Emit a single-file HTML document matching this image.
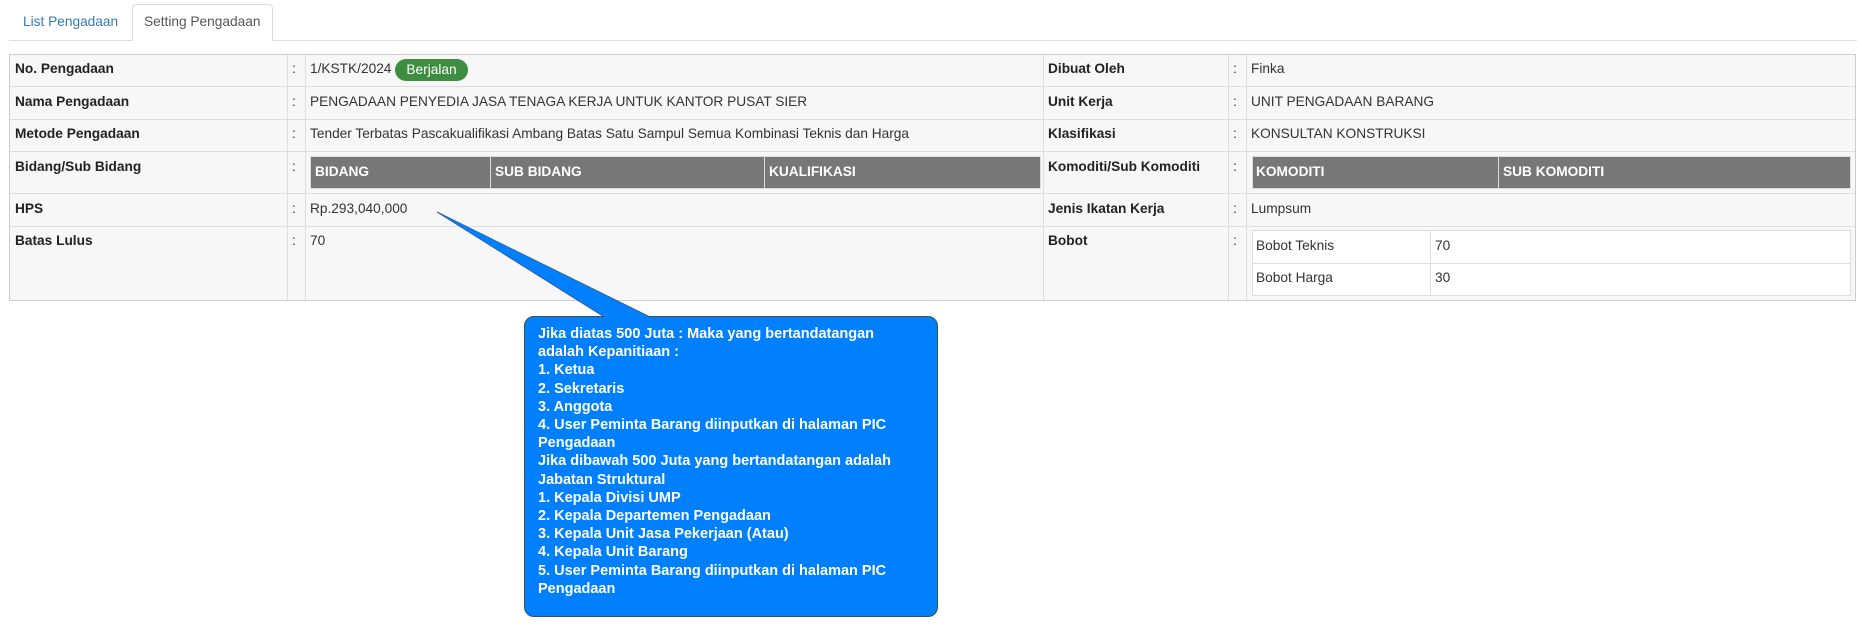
<!DOCTYPE html>
<html><head><meta charset="utf-8"><style>
*{margin:0;padding:0;box-sizing:border-box}
body{width:1862px;height:633px;background:#fff;position:relative;overflow:hidden;font-family:"Liberation Sans",sans-serif;font-size:13.7px;color:#333}
.a{position:absolute;white-space:nowrap;line-height:16px}
.b{font-weight:bold;color:#222}
.l{position:absolute;background:#ddd}
.h{position:absolute;background:#777;border:1px solid #ddd}
.w{color:#fff;font-weight:bold}
</style></head><body>
<!-- tabs -->
<div class="l" style="left:9px;top:40px;width:1848px;height:1px;background:#ddd"></div>
<div style="position:absolute;left:132px;top:4px;width:141px;height:37px;border:1px solid #ddd;border-bottom:none;background:#fff;border-radius:4px 4px 0 0"></div>
<div class="a" style="left:23px;top:14px;color:#337ab7">List Pengadaan</div>
<div class="a" style="left:144px;top:14px;color:#555">Setting Pengadaan</div>
<!-- table -->
<div style="position:absolute;left:9px;top:54px;width:1847px;height:247px;background:#f7f7f7;border:1px solid #ccc"></div>
<div class="l" style="left:10px;top:86px;width:1845px;height:1px"></div>
<div class="l" style="left:10px;top:119px;width:1845px;height:1px"></div>
<div class="l" style="left:10px;top:151px;width:1845px;height:1px"></div>
<div class="l" style="left:10px;top:193px;width:1845px;height:1px"></div>
<div class="l" style="left:10px;top:226px;width:1845px;height:1px"></div>
<div class="l" style="left:287px;top:55px;width:1px;height:245px"></div>
<div class="l" style="left:305px;top:55px;width:1px;height:245px"></div>
<div class="l" style="left:1043px;top:55px;width:1px;height:245px"></div>
<div class="l" style="left:1228px;top:55px;width:1px;height:245px"></div>
<div class="l" style="left:1246px;top:55px;width:1px;height:245px"></div>
<!-- left labels -->
<div class="a b" style="left:15px;top:61px">No. Pengadaan</div>
<div class="a b" style="left:15px;top:94px">Nama Pengadaan</div>
<div class="a b" style="left:15px;top:126px">Metode Pengadaan</div>
<div class="a b" style="left:15px;top:159px">Bidang/Sub Bidang</div>
<div class="a b" style="left:15px;top:201px">HPS</div>
<div class="a b" style="left:15px;top:233px">Batas Lulus</div>
<div class="a" style="left:292px;top:61px">:</div>
<div class="a" style="left:292px;top:94px">:</div>
<div class="a" style="left:292px;top:126px">:</div>
<div class="a" style="left:292px;top:159px">:</div>
<div class="a" style="left:292px;top:201px">:</div>
<div class="a" style="left:292px;top:233px">:</div>
<div class="a" style="left:310px;top:61px">1/KSTK/2024</div>
<div class="a" style="left:395px;top:59px;width:73px;height:22px;line-height:22px;background:#3e8e41;border-radius:11px;color:#fff;text-align:center">Berjalan</div>
<div class="a" style="left:310px;top:94px">PENGADAAN PENYEDIA JASA TENAGA KERJA UNTUK KANTOR PUSAT SIER</div>
<div class="a" style="left:310px;top:126px">Tender Terbatas Pascakualifikasi Ambang Batas Satu Sampul Semua Kombinasi Teknis dan Harga</div>
<div class="h" style="left:310px;top:156px;width:181px;height:33px"></div>
<div class="h" style="left:490px;top:156px;width:275px;height:33px"></div>
<div class="h" style="left:764px;top:156px;width:277px;height:33px"></div>
<div class="a w" style="left:315px;top:164px">BIDANG</div>
<div class="a w" style="left:495px;top:164px">SUB BIDANG</div>
<div class="a w" style="left:769px;top:164px">KUALIFIKASI</div>
<div class="a" style="left:310px;top:201px">Rp.293,040,000</div>
<div class="a" style="left:310px;top:233px">70</div>
<!-- right -->
<div class="a b" style="left:1048px;top:61px">Dibuat Oleh</div>
<div class="a b" style="left:1048px;top:94px">Unit Kerja</div>
<div class="a b" style="left:1048px;top:126px">Klasifikasi</div>
<div class="a b" style="left:1048px;top:159px">Komoditi/Sub Komoditi</div>
<div class="a b" style="left:1048px;top:201px">Jenis Ikatan Kerja</div>
<div class="a b" style="left:1048px;top:233px">Bobot</div>
<div class="a" style="left:1233px;top:61px">:</div>
<div class="a" style="left:1233px;top:94px">:</div>
<div class="a" style="left:1233px;top:126px">:</div>
<div class="a" style="left:1233px;top:159px">:</div>
<div class="a" style="left:1233px;top:201px">:</div>
<div class="a" style="left:1233px;top:233px">:</div>
<div class="a" style="left:1251px;top:61px">Finka</div>
<div class="a" style="left:1251px;top:94px">UNIT PENGADAAN BARANG</div>
<div class="a" style="left:1251px;top:126px">KONSULTAN KONSTRUKSI</div>
<div class="h" style="left:1252px;top:156px;width:247px;height:33px"></div>
<div class="h" style="left:1498px;top:156px;width:353px;height:33px"></div>
<div class="a w" style="left:1256px;top:164px">KOMODITI</div>
<div class="a w" style="left:1503px;top:164px">SUB KOMODITI</div>
<div class="a" style="left:1251px;top:201px">Lumpsum</div>
<div style="position:absolute;left:1252px;top:230px;width:599px;height:66px;background:#fff;border:1px solid #ddd"></div>
<div class="l" style="left:1252px;top:263px;width:599px;height:1px"></div>
<div class="l" style="left:1430px;top:230px;width:1px;height:66px"></div>
<div class="a" style="left:1256px;top:238px">Bobot Teknis</div>
<div class="a" style="left:1435px;top:238px">70</div>
<div class="a" style="left:1256px;top:270px">Bobot Harga</div>
<div class="a" style="left:1435px;top:270px">30</div>
<!-- callout -->
<svg style="position:absolute;left:0;top:0" width="1862" height="633"><polygon points="437,212 606,318 652,318" fill="#0080ff" stroke="#3a5a80" stroke-width="1"/></svg>
<div style="position:absolute;left:524px;top:316px;width:414px;height:301px;background:#0080ff;border:1px solid #355;border-radius:10px"></div>
<svg style="position:absolute;left:0;top:0" width="1862" height="633"><polygon points="439,213 607,318 651,318" fill="#0080ff"/></svg>
<div style="position:absolute;left:538px;top:325px;font-family:'Liberation Sans',sans-serif;font-weight:bold;font-size:14.5px;line-height:18.2px;color:#fff;white-space:nowrap">Jika diatas 500 Juta : Maka yang bertandatangan<br>adalah Kepanitiaan :<br>1. Ketua<br>2. Sekretaris<br>3. Anggota<br>4. User Peminta Barang diinputkan di halaman PIC<br>Pengadaan<br>Jika dibawah 500 Juta yang bertandatangan adalah<br>Jabatan Struktural<br>1. Kepala Divisi UMP<br>2. Kepala Departemen Pengadaan<br>3. Kepala Unit Jasa Pekerjaan (Atau)<br>4. Kepala Unit Barang<br>5. User Peminta Barang diinputkan di halaman PIC<br>Pengadaan</div>
</body></html>
